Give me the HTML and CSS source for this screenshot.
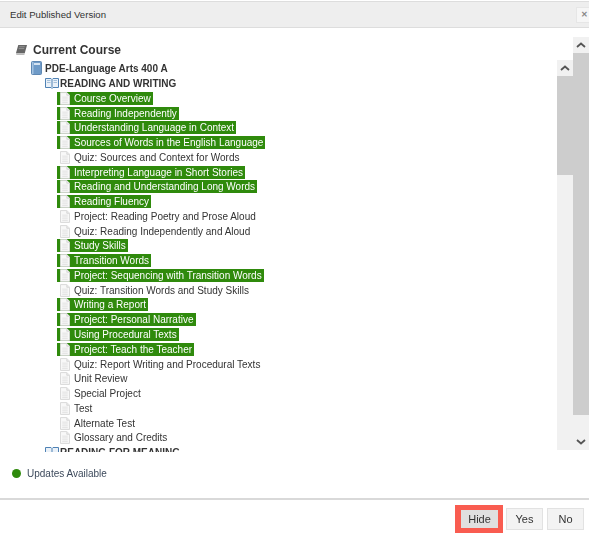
FILE: index.html
```html
<!DOCTYPE html>
<html lang="en">
<head>
  <meta charset="UTF-8">
  <title>Edit Published Version</title>
  <link rel="stylesheet" href="styles.css">
</head>
<body>
  <svg class="defs" width="0" height="0">
    <symbol id="page" viewBox="0 0 11 14">
      <path d="M.5.5h7l3 3v10H.5z" fill="#f8f8f8" stroke="#d6d6d6"/>
      <path d="M7.500.5v3h3" fill="#eaeaea" stroke="#d6d6d6"/>
      <path d="M2.500 5.500h6M2.500 7.500h6M2.500 9.500h6M2.500 11.500h6" stroke="#e0e0e0"/>
    </symbol>
  </svg>

  <div class="dialog">
    <div class="title-bar">
      <span>Edit Published Version</span>
      <span class="close">✕</span>
    </div>

    <div class="outer-pane">
      <div class="outer-content">
        <h2 class="current">
          <svg class="book-icon" width="13" height="12" viewBox="0 0 14 13">
            <path d="M3.500 1H13L10.500 10H1z" fill="#666"/>
            <path d="M1 10h9.500l-.4 2H1.500z" fill="#bbb"/>
            <path d="M4.500 3h6M4 5h6" stroke="#999"/>
          </svg>
          Current Course
        </h2>
        <div class="inner-pane">
          <div class="tree">
            <div class="course">
              <svg width="11" height="14" viewBox="0 0 11 14">
                <rect x=".5" y=".5" width="10" height="13" rx="1" fill="#6f9bc8" stroke="#5f88b3"/>
                <rect x="1" y="1" width="1.500" height="12" fill="#a5c4e2"/>
                <rect x="3" y="2" width="6" height="2" fill="#d5e3f1"/>
              </svg>
              PDE-Language Arts 400 A
            </div>
            <div class="unit">
              <svg width="14" height="12" viewBox="0 0 14 12">
                <path d="M.5 1.500h5.500l1 1 1-1h5.500v9H8l-1 1-1-1H.5z" fill="#eaf1f8" stroke="#4f82b5"/>
                <path d="M7 2.500v8" stroke="#4f82b5"/>
                <path d="M2 3.500h3.500M2 5.500h3.500M8.500 3.500H12M8.500 5.500H12" stroke="#a5c0da"/>
              </svg>
              READING AND WRITING
            </div>
            <div class="lesson done"><svg><use href="#page"/></svg><span>Course Overview</span></div>
            <div class="lesson done"><svg><use href="#page"/></svg><span>Reading Independently</span></div>
            <div class="lesson done"><svg><use href="#page"/></svg><span>Understanding Language in Context</span></div>
            <div class="lesson done"><svg><use href="#page"/></svg><span>Sources of Words in the English Language</span></div>
            <div class="lesson"><svg><use href="#page"/></svg><span>Quiz: Sources and Context for Words</span></div>
            <div class="lesson done"><svg><use href="#page"/></svg><span>Interpreting Language in Short Stories</span></div>
            <div class="lesson done"><svg><use href="#page"/></svg><span>Reading and Understanding Long Words</span></div>
            <div class="lesson done"><svg><use href="#page"/></svg><span>Reading Fluency</span></div>
            <div class="lesson"><svg><use href="#page"/></svg><span>Project: Reading Poetry and Prose Aloud</span></div>
            <div class="lesson"><svg><use href="#page"/></svg><span>Quiz: Reading Independently and Aloud</span></div>
            <div class="lesson done"><svg><use href="#page"/></svg><span>Study Skills</span></div>
            <div class="lesson done"><svg><use href="#page"/></svg><span>Transition Words</span></div>
            <div class="lesson done"><svg><use href="#page"/></svg><span>Project: Sequencing with Transition Words</span></div>
            <div class="lesson"><svg><use href="#page"/></svg><span>Quiz: Transition Words and Study Skills</span></div>
            <div class="lesson done"><svg><use href="#page"/></svg><span>Writing a Report</span></div>
            <div class="lesson done"><svg><use href="#page"/></svg><span>Project: Personal Narrative</span></div>
            <div class="lesson done"><svg><use href="#page"/></svg><span>Using Procedural Texts</span></div>
            <div class="lesson done"><svg><use href="#page"/></svg><span>Project: Teach the Teacher</span></div>
            <div class="lesson"><svg><use href="#page"/></svg><span>Quiz: Report Writing and Procedural Texts</span></div>
            <div class="lesson"><svg><use href="#page"/></svg><span>Unit Review</span></div>
            <div class="lesson"><svg><use href="#page"/></svg><span>Special Project</span></div>
            <div class="lesson"><svg><use href="#page"/></svg><span>Test</span></div>
            <div class="lesson"><svg><use href="#page"/></svg><span>Alternate Test</span></div>
            <div class="lesson"><svg><use href="#page"/></svg><span>Glossary and Credits</span></div>
            <div class="unit next-unit">
              <svg width="14" height="12" viewBox="0 0 14 12">
                <path d="M.5 1.500h5.500l1 1 1-1h5.500v9H8l-1 1-1-1H.5z" fill="#eaf1f8" stroke="#4f82b5"/>
                <path d="M7 2.500v8" stroke="#4f82b5"/>
              </svg>
              READING FOR MEANING
            </div>
          </div>
          <div class="scrollbar inner-bar">
            <div class="arrow"><svg width="10" height="6" viewBox="0 0 10 6"><path d="M1 5l4-3.500L9 5" fill="none" stroke="#555" stroke-width="1.800"/></svg></div>
            <div class="thumb"></div>
          </div>
        </div>
      </div>
      <div class="scrollbar outer-bar">
        <div class="arrow"><svg width="10" height="6" viewBox="0 0 10 6"><path d="M1 5l4-3.500L9 5" fill="none" stroke="#555" stroke-width="1.800"/></svg></div>
        <div class="thumb"></div>
        <div class="arrow"><svg width="10" height="6" viewBox="0 0 10 6"><path d="M1 1l4 3.500L9 1" fill="none" stroke="#555" stroke-width="1.800"/></svg></div>
      </div>
    </div>

    <div class="legend">
      <span class="dot"></span>
      <span>Updates Available</span>
    </div>

    <div class="footer">
      <span class="hide-mark"><button class="btn btn-hide">Hide</button></span>
      <button class="btn">Yes</button>
      <button class="btn">No</button>
    </div>
  </div>
</body>
</html>
```

FILE: styles.css
```css
* {
  box-sizing: border-box;
}
body {
  margin: 0;
  background-color: white;
  font-family: "Liberation Sans", Arial, sans-serif;
  font-size: 10px;
  color: #333;
}
.defs {
  position: absolute;
}
.dialog {
  display: flex;
  flex-direction: column;
  width: 589px;
  height: 540px;
  padding-top: 1px;
  overflow: hidden;
  /* the screenshot is soft all over */
  filter: blur(0.35px);
}
.title-bar {
  display: flex;
  justify-content: space-between;
  align-items: center;
  flex: none;
  height: 27px;
  padding-left: 10px;
  background-color: #eeeeee;
  border-top: 1px solid #dddddd;
  border-bottom: 1px solid #dddddd;
  font-size: 9.6px;
}
.close {
  display: flex;
  justify-content: flex-start;
  align-items: center;
  width: 13px;
  height: 16px;
  padding-left: 4px;
  background-color: #f6f6f6;
  border: 1px solid #e6e6e6;
  border-right: 0;
  color: #888;
  font-size: 8px;
  font-weight: bold;
}
.outer-pane {
  display: flex;
  flex: none;
  height: 413px;
  margin-top: 9px;
}
.outer-content {
  display: flex;
  flex-direction: column;
  flex: 1;
  min-width: 0;
}
.current {
  display: flex;
  align-items: center;
  gap: 5px;
  flex: none;
  height: 23px;
  margin: 0;
  padding: 2px 0 0 15px;
  font-size: 12px;
  font-weight: bold;
}
.inner-pane {
  display: flex;
  flex: 1;
  min-height: 0;
}
.tree {
  flex: 1;
  /* lets the next unit peek out just under the scrollbars */
  margin-bottom: -2px;
  overflow: hidden;
}
.course {
  display: flex;
  align-items: center;
  gap: 3px;
  height: 16px;
  padding-left: 31px;
  font-weight: bold;
}
.unit {
  display: flex;
  align-items: center;
  gap: 1px;
  height: 14px;
  padding-left: 45px;
  font-weight: bold;
}
.next-unit {
  margin-top: 1px;
}
.lesson {
  display: flex;
  align-items: center;
  height: 13px;
  margin: 1.78px 0 0 57px;
}
.lesson svg {
  flex: none;
  width: 10px;
  height: 13px;
  margin-left: 3px;
}
.lesson span {
  padding: 0 2px 0 4px;
}
.done {
  width: fit-content;
  background-color: #2f8a0c;
}
.done span {
  color: white;
}
.scrollbar {
  display: flex;
  flex-direction: column;
  flex: none;
  width: 16px;
  background-color: #f1f1f1;
}
.arrow {
  display: flex;
  justify-content: center;
  align-items: center;
  flex: none;
  height: 16px;
}
.thumb {
  background-color: #cdcdcd;
}
.inner-bar .thumb {
  height: 99px;
}
.outer-bar .thumb {
  flex: none;
  height: 362px;
}
.outer-bar .arrow:last-child {
  margin-top: auto;
}
.legend {
  display: flex;
  align-items: center;
  gap: 6px;
  flex: none;
  height: 20px;
  margin-top: 13px;
  padding-left: 12px;
  color: #3d4a5c;
}
.dot {
  width: 9px;
  height: 9px;
  border-radius: 50%;
  background-color: #2f8a0c;
}
.footer {
  display: flex;
  align-items: center;
  justify-content: flex-end;
  gap: 4px;
  flex: none;
  height: 40px;
  margin-top: 15px;
  padding-right: 5px;
  border-top: 2px solid #d9d9d9;
}
.btn {
  width: 37px;
  height: 22px;
  padding: 0;
  background-color: #f3f3f3;
  border: 1px solid #e2e2e2;
  color: #333;
  font-family: "Liberation Sans", Arial, sans-serif;
  font-size: 11px;
}
.hide-mark {
  display: flex;
  padding: 5px 5px 5px 6px;
  margin-right: -1px;
  background-color: #f95c50;
}
.btn-hide {
  height: 18px;
  background-color: #e0e0e0;
  border-color: #e0e0e0;
}
```
